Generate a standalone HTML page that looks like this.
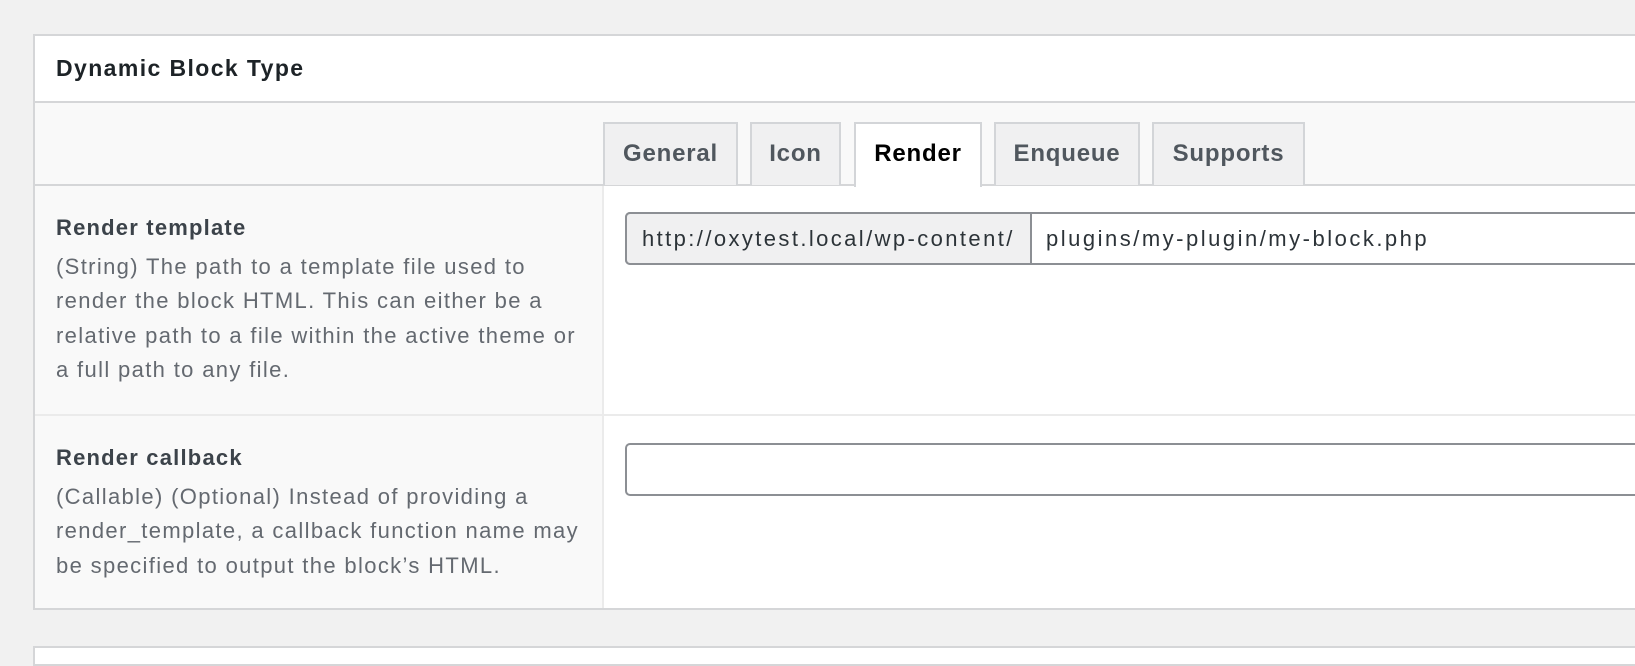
<!DOCTYPE html>
<html><head><meta charset="utf-8"><style>
*{box-sizing:border-box;margin:0;padding:0}
body{width:1635px;height:652px;background:#f1f1f1;position:relative;overflow:hidden;font-family:"Liberation Sans",Arial,sans-serif}
.a{position:absolute;white-space:nowrap}
.panel{left:33px;top:34px;width:1700px;height:576px;background:#fff;border:2px solid #d5d6d8}
.lbl{font-weight:bold;font-size:22px;color:#3c434a;letter-spacing:1.2px}
.desc{font-size:22px;color:#646970;line-height:34.4px;letter-spacing:1.35px}
.tab{top:122px;height:63px;background:#f0f0f1;border:2px solid #d3d5d8;border-bottom:none;font-weight:bold;font-size:24px;color:#50575e;text-align:center;line-height:60px;letter-spacing:0.8px}
</style></head><body>
<div class="a panel"></div>
<div class="a" style="left:35px;top:36px;width:1600px;height:66px;background:#fff"></div>
<div class="a" style="left:56px;top:55px;font-weight:bold;font-size:23px;color:#1d2327;letter-spacing:1.4px">Dynamic Block Type</div>
<div class="a" style="left:35px;top:101px;width:1600px;height:2px;background:#d5d6d8"></div>
<div class="a" style="left:35px;top:103px;width:1600px;height:82px;background:#f9f9f9"></div>
<div class="a" style="left:35px;top:184px;width:1600px;height:2px;background:#d5d6d8"></div>
<div class="a tab" style="left:603px;width:135px">General</div>
<div class="a tab" style="left:750px;width:91px">Icon</div>
<div class="a tab" style="left:854px;width:128px;background:#fff;color:#000;height:65px">Render</div>
<div class="a tab" style="left:994px;width:146px">Enqueue</div>
<div class="a tab" style="left:1152px;width:153px">Supports</div>
<div class="a" style="left:35px;top:186px;width:567px;height:422px;background:#f9f9f9"></div>
<div class="a" style="left:602px;top:186px;width:2px;height:422px;background:#ebebeb"></div>
<div class="a" style="left:35px;top:414px;width:1600px;height:2px;background:#ebebeb"></div>
<div class="a lbl" style="left:56px;top:215px">Render template</div>
<div class="a desc" style="left:56px;top:250px">(String) The path to a template file used to<br>render the block HTML. This can either be a<br>relative path to a file within the active theme or<br>a full path to any file.</div>
<div class="a lbl" style="left:56px;top:445px">Render callback</div>
<div class="a desc" style="left:56px;top:480px">(Callable) (Optional) Instead of providing a<br>render_template, a callback function name may<br>be specified to output the block’s HTML.</div>
<div class="a" style="left:625px;top:212px;width:1100px;height:53px;border:2px solid #8c8f94;border-radius:5px;background:#fff"></div>
<div class="a" style="left:625px;top:212px;width:407px;height:53px;border:2px solid #8c8f94;border-radius:5px 0 0 5px;background:#f0f0f1;font-size:22px;color:#2c3338;line-height:49px;padding-left:15px;letter-spacing:2.4px">http://oxytest.local/wp-content/</div>
<div class="a" style="left:1046px;top:212px;font-size:22px;color:#2c3338;line-height:53px;letter-spacing:2.5px">plugins/my-plugin/my-block.php</div>
<div class="a" style="left:625px;top:443px;width:1100px;height:53px;border:2px solid #8c8f94;border-radius:5px;background:#fff"></div>
<div class="a" style="left:33px;top:646px;width:1700px;height:20px;background:#fff;border:2px solid #d5d6d8"></div>
</body></html>
